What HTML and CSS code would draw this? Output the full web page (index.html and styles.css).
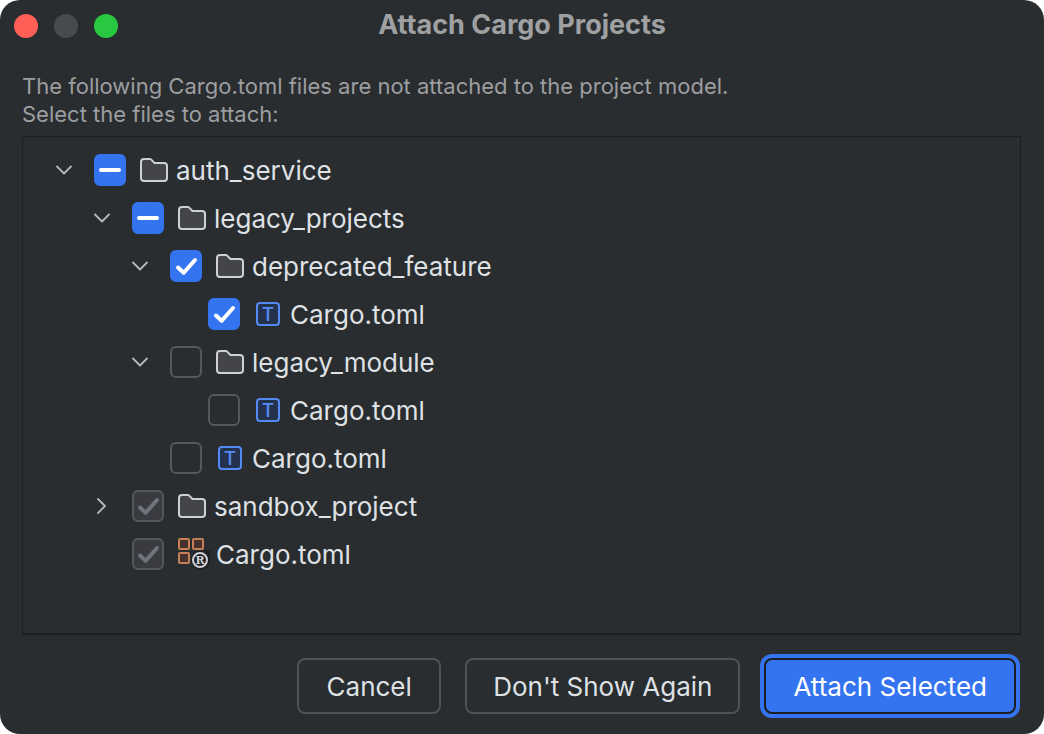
FILE: index.html
```html
<!DOCTYPE html>
<html lang="en">
  <head>
    <meta charset="utf-8">
    <title>Attach Cargo Projects</title>
    <meta name="viewport" content="width=device-width, initial-scale=1">
    <link rel="stylesheet" href="styles.css">
  </head>
  <body>
    <svg class="defs" aria-hidden="true">
      <symbol id="down" viewBox="0 0 32 32">
        <path d="M9 12.500 L16 19.500 L23 12.500" fill="none" stroke="#b4b8bf" stroke-width="1.800" stroke-linecap="round" stroke-linejoin="round"/>
      </symbol>
      <symbol id="right" viewBox="0 0 32 32">
        <path d="M12 9 L19 16 L12 23" fill="none" stroke="#b4b8bf" stroke-width="1.800" stroke-linecap="round" stroke-linejoin="round"/>
      </symbol>
      <symbol id="tick" viewBox="0 0 32 32">
        <path d="M8 17.500 L13.700 22.800 L25 10" fill="none" stroke="currentColor" stroke-width="4" stroke-linecap="round" stroke-linejoin="round"/>
      </symbol>
      <symbol id="dash" viewBox="0 0 32 32">
        <path d="M7 16 H25" fill="none" stroke="currentColor" stroke-width="4" stroke-linecap="round"/>
      </symbol>
      <symbol id="folder" viewBox="0 0 32 32">
        <path d="M3 8 a3 3 0 0 1 3-3 h5.700 a2 2 0 0 1 1.500.600 L16.500 9 H26 a3 3 0 0 1 3 3 v12 a3 3 0 0 1-3 3 H6 a3 3 0 0 1-3-3z" fill="#43454a" stroke="#ced0d6" stroke-width="2"/>
      </symbol>
    </svg>

    <main class="dialog">
      <header class="titlebar">
        <div class="lights">
          <button class="light close" aria-label="Close"></button>
          <button class="light minimize" aria-label="Minimize" disabled></button>
          <button class="light maximize" aria-label="Zoom"></button>
        </div>
        <h1 class="title">Attach Cargo Projects</h1>
      </header>

      <p class="hint">The following Cargo.toml files are not attached to the project model.<br>Select the files to attach:</p>

      <div class="tree">
        <ul>
          <li>
            <div class="row">
              <button class="toggle" aria-label="Collapse auth_service"><svg><use href="#down"/></svg></button>
              <span class="check"><input type="checkbox" id="auth" class="mixed"><svg><use href="#dash"/></svg></span>
              <label for="auth"><svg class="icon"><use href="#folder"/></svg><span class="name">auth_service</span></label>
            </div>
            <ul>
              <li>
                <div class="row">
                  <button class="toggle" aria-label="Collapse legacy_projects"><svg><use href="#down"/></svg></button>
                  <span class="check"><input type="checkbox" id="legacy" class="mixed"><svg><use href="#dash"/></svg></span>
                  <label for="legacy"><svg class="icon"><use href="#folder"/></svg><span class="name">legacy_projects</span></label>
                </div>
                <ul>
                  <li>
                    <div class="row">
                      <button class="toggle" aria-label="Collapse deprecated_feature"><svg><use href="#down"/></svg></button>
                      <span class="check"><input type="checkbox" id="deprecated" checked><svg><use href="#tick"/></svg></span>
                      <label for="deprecated"><svg class="icon"><use href="#folder"/></svg><span class="name">deprecated_feature</span></label>
                    </div>
                    <ul>
                      <li>
                        <div class="row leaf">
                          <span class="check"><input type="checkbox" id="deprecated-toml" checked><svg><use href="#tick"/></svg></span>
                          <label for="deprecated-toml"><span class="toml" aria-hidden="true">T</span><span class="name">Cargo.toml</span></label>
                        </div>
                      </li>
                    </ul>
                  </li>
                  <li>
                    <div class="row">
                      <button class="toggle" aria-label="Collapse legacy_module"><svg><use href="#down"/></svg></button>
                      <span class="check"><input type="checkbox" id="module"><svg><use href="#tick"/></svg></span>
                      <label for="module"><svg class="icon"><use href="#folder"/></svg><span class="name">legacy_module</span></label>
                    </div>
                    <ul>
                      <li>
                        <div class="row leaf">
                          <span class="check"><input type="checkbox" id="module-toml"><svg><use href="#tick"/></svg></span>
                          <label for="module-toml"><span class="toml" aria-hidden="true">T</span><span class="name">Cargo.toml</span></label>
                        </div>
                      </li>
                    </ul>
                  </li>
                  <li>
                    <div class="row leaf">
                      <span class="check"><input type="checkbox" id="legacy-toml"><svg><use href="#tick"/></svg></span>
                      <label for="legacy-toml"><span class="toml" aria-hidden="true">T</span><span class="name">Cargo.toml</span></label>
                    </div>
                  </li>
                </ul>
              </li>
              <li>
                <div class="row">
                  <button class="toggle" aria-label="Expand sandbox_project"><svg><use href="#right"/></svg></button>
                  <span class="check"><input type="checkbox" id="sandbox" checked disabled><svg><use href="#tick"/></svg></span>
                  <label for="sandbox"><svg class="icon"><use href="#folder"/></svg><span class="name">sandbox_project</span></label>
                </div>
              </li>
              <li>
                <div class="row leaf">
                  <span class="check"><input type="checkbox" id="root-toml" checked disabled><svg><use href="#tick"/></svg></span>
                  <label for="root-toml">
                    <svg class="icon wide" viewBox="0 0 34 32" aria-hidden="true">
                      <g fill="#45322b" stroke="#c77d55" stroke-width="2">
                        <rect x="3" y="1" width="10" height="10" rx="1"/>
                        <rect x="17" y="1" width="10" height="10" rx="1"/>
                        <rect x="3" y="15" width="10" height="10" rx="1"/>
                      </g>
                      <path d="M24 12.500 H34 V22 A9.500 9.500 0 1 1 24 12.500z" fill="#1e1f22"/>
                      <circle cx="24" cy="22" r="7" fill="none" stroke="#ced0d6" stroke-width="2"/>
                      <text x="24" y="26" class="rust">R</text>
                    </svg>
                    <span class="name">Cargo.toml</span>
                  </label>
                </div>
              </li>
            </ul>
          </li>
        </ul>
      </div>

      <footer class="actions">
        <button class="btn">Cancel</button>
        <button class="btn">Don't Show Again</button>
        <button class="btn primary">Attach Selected</button>
      </footer>
    </main>
    <script>
// The mixed state can't be set from markup.
document.querySelectorAll(".mixed").forEach(function (box) {
  box.indeterminate = true;
});
    </script>
  </body>
</html>
```
FILE: styles.css
```css
* {
  box-sizing: border-box;
}
body {
  margin: 0;
  background: #ffffff;
  font-family: Inter, "Liberation Sans", sans-serif;
}
button {
  padding: 0;
  border: 0;
  background: none;
  font: inherit;
  color: inherit;
}
.defs {
  position: absolute;
  width: 0;
  height: 0;
}
.dialog {
  display: flex;
  flex-direction: column;
  min-height: 100vh;
  border-radius: 20px;
  background: #292d30;
  color: #dfe1e5;
  font-size: 26px;
}

/* title bar */
.titlebar {
  display: grid;
  grid-template-columns: 1fr auto 1fr;
  align-items: center;
  height: 52px;
  padding: 0 14px;
}
.lights {
  display: flex;
  gap: 16px;
}
.light {
  width: 24px;
  height: 24px;
  border-radius: 50%;
}
.close {
  background: #ff5f57;
}
.minimize {
  background: #484b4d;
}
.maximize {
  background: #28c840;
}
.title {
  margin: 0;
  padding-bottom: 2px;
  font-size: 27px;
  line-height: 32px;
  font-weight: 700;
  color: #9fa0a2;
}
.hint {
  margin: 20px 22px 8px;
  font-size: 22px;
  line-height: 28px;
  color: #9d9ea0;
}

/* tree */
.tree {
  flex: 1;
  margin: 0 23px 0 22px;
  padding: 9px 25px;
  border: 1px solid #1e1f22;
  border-bottom-width: 2px;
}
.tree ul {
  margin: 0;
  padding: 0;
  list-style: none;
}
.tree ul ul {
  padding-left: 38px;
}
.row {
  display: flex;
  align-items: center;
  height: 48px;
}
.row.leaf {
  padding-left: 46px;
}
.toggle {
  width: 32px;
  height: 32px;
  margin-right: 14px;
}
.toggle svg,
.check svg,
.icon {
  display: block;
  width: 32px;
  height: 32px;
}
.icon.wide {
  width: 34px;
}
.check {
  display: grid;
  margin-right: 12px;
}
.check input,
.check svg {
  grid-area: 1 / 1;
}
.check input {
  appearance: none;
  width: 32px;
  height: 32px;
  margin: 0;
  border: 2px solid #55595c;
  border-radius: 6px;
}
.check svg {
  visibility: hidden;
  color: #ffffff;
  pointer-events: none;
}
.check input:checked,
.check input:indeterminate {
  border-color: #3574f0;
  background: #3574f0;
}
.check input:checked + svg,
.check input:indeterminate + svg {
  visibility: visible;
}
.check input:disabled {
  border-color: #55595c;
  background: #393b40;
}
.check input:disabled + svg {
  color: #6f737a;
}
.row label {
  display: flex;
  align-items: center;
  gap: 6px;
  line-height: 32px;
}
.name {
  padding-top: 2px;
}
.toml {
  width: 24px;
  height: 24px;
  margin: 0 4px;
  border: 2px solid #548af7;
  border-radius: 4px;
  background: #25324d;
  color: #548af7;
  font-size: 19px;
  line-height: 22px;
  font-weight: 500;
  text-align: center;
}
.rust {
  font: bold 11px "DejaVu Serif", serif;
  text-anchor: middle;
  fill: #ced0d6;
}

/* buttons */
.actions {
  display: flex;
  justify-content: flex-end;
  gap: 24px;
  padding: 23px 28px 20px;
}
.btn {
  height: 56px;
  padding: 2px 26px 0;
  border: 2px solid #4e5157;
  border-radius: 8px;
  line-height: 32px;
}
.btn:first-child {
  min-width: 144px;
}
.btn.primary {
  padding: 2px 27px 0;
  border-color: #1e1f22;
  background: #3574f0;
  box-shadow: 0 0 0 4px #3574f0;
  color: #ffffff;
}
```
